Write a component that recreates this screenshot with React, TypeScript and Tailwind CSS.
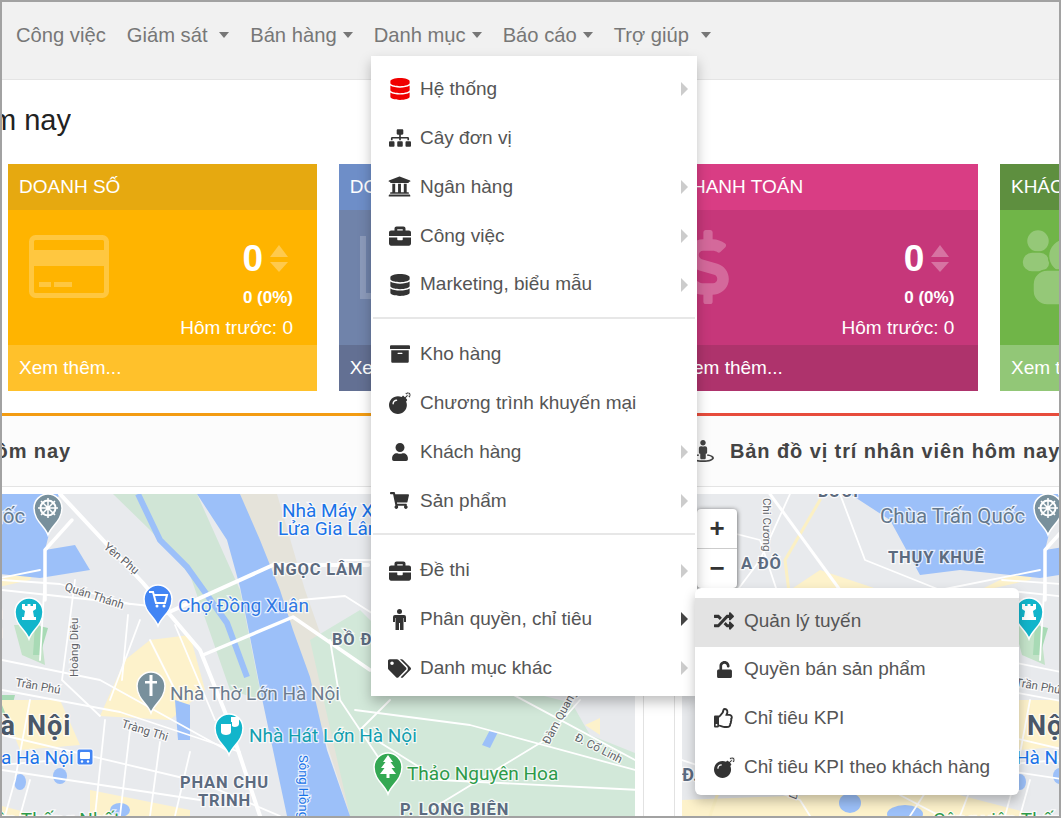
import React from 'react';
import {
  FaArchive,
  FaBomb,
  FaBriefcase,
  FaDatabase,
  FaDollarSign,
  FaRandom,
  FaRegThumbsUp,
  FaShoppingCart,
  FaSitemap,
  FaStreetView,
  FaTags,
  FaUniversity,
  FaUnlock,
  FaUser,
} from 'react-icons/fa';

function MaleIcon() {
  return (
    <svg width="13" height="21" viewBox="0 0 13 21" className="fill-current">
      <circle cx="6.500" cy="2.500" r="2.500" />
      <path d="M2 6h9a2 2 0 0 1 2 2v5h-2V9h-.5v12H7v-7H6v7H2.500V9H2v4H0V8a2 2 0 0 1 2-2z" />
    </svg>
  );
}

const navItems = [
  { label: 'Công việc', caret: false },
  { label: 'Giám sát\u00a0', caret: true },
  { label: 'Bán hàng', caret: true },
  { label: 'Danh mục', caret: true },
  { label: 'Báo cáo', caret: true },
  { label: 'Trợ giúp\u00a0', caret: true },
];

const menuGroups = [
  [
    { label: 'Hệ thống', icon: <FaDatabase className="text-[#f00000]" size={22} />, sub: true },
    { label: 'Cây đơn vị', icon: <FaSitemap size={22} />, sub: false },
    { label: 'Ngân hàng', icon: <FaUniversity size={23} />, sub: true },
    { label: 'Công việc', icon: <FaBriefcase size={22} />, sub: true },
    { label: 'Marketing, biểu mẫu', icon: <FaDatabase size={22} />, sub: true },
  ],
  [
    { label: 'Kho hàng', icon: <FaArchive size={20} />, sub: false },
    { label: 'Chương trình khuyến mại', icon: <FaBomb size={22} />, sub: false },
    { label: 'Khách hàng', icon: <FaUser size={18} />, sub: true },
    { label: 'Sản phẩm', icon: <FaShoppingCart size={19} />, sub: true },
  ],
  [
    { label: 'Đề thi', icon: <FaBriefcase size={22} />, sub: true },
    { label: 'Phân quyền, chỉ tiêu', icon: <MaleIcon />, sub: true, active: true },
    { label: 'Danh mục khác', icon: <FaTags size={23} />, sub: true },
  ],
];

const subItems = [
  { label: 'Quản lý tuyến', icon: <FaRandom size={20} />, active: true },
  { label: 'Quyền bán sản phẩm', icon: <FaUnlock size={17} /> },
  { label: 'Chỉ tiêu KPI', icon: <FaRegThumbsUp size={20} /> },
  { label: 'Chỉ tiêu KPI theo khách hàng', icon: <FaBomb size={21} /> },
];

function SortIcon() {
  return (
    <svg width="18" height="27" viewBox="0 0 18 27" className="fill-white/30">
      <path d="M9 0l9 12H0z" />
      <path d="M0 17h18l-9 10z" />
    </svg>
  );
}

function CardIcon() {
  return (
    <svg width="80" height="64" viewBox="0 0 80 64" className="fill-none stroke-white/25">
      <rect x="2.500" y="2.500" width="75" height="58" rx="4" strokeWidth="5" />
      <path d="M5 23h70" strokeWidth="16" />
      <path d="M10 49.500h12M25 49.500h18" strokeWidth="5" />
    </svg>
  );
}

function ChartIcon() {
  return (
    <svg width="80" height="64" viewBox="0 0 80 64" className="fill-none stroke-white/20">
      <path d="M3 1v60h77" strokeWidth="6" />
    </svg>
  );
}

function UsersIcon() {
  return (
    <svg width="90" height="76" viewBox="0 0 90 76" className="fill-[#95c878] stroke-[#70b548] -mt-[5px]" strokeWidth="1.500">
      <circle cx="17" cy="11" r="11.500" />
      <rect x="1" y="22" width="28" height="20" rx="10" />
      <circle cx="45" cy="26" r="17.500" />
      <rect x="12" y="40" width="62" height="35" rx="14" />
    </svg>
  );
}

function StatCard({
  title,
  icon,
  head,
  body,
  foot,
}: {
  title: string;
  icon: React.ReactNode;
  head: string;
  body: string;
  foot: string;
}) {
  return (
    <div className="w-[309px] shrink-0 text-white">
      <div className={`h-[46px] flex items-center px-[11px] text-[19px] ${head}`}>{title}</div>
      <div className={`h-[135px] flex justify-between pl-[21px] pr-[24px] ${body}`}>
        <div className="pt-[25px] h-fit">{icon}</div>
        <div className="flex flex-col items-end">
          <div className="flex items-center gap-[7px] mt-[28px] mr-[5px] h-[40px]">
            <span className="text-[37px] leading-none font-bold">0</span>
            <SortIcon />
          </div>
          <div className="mt-[9px] text-[17px] font-bold leading-[22px]">0 (0%)</div>
          <div className="mt-[8px] text-[19px] leading-[22px]">Hôm trước: 0</div>
        </div>
      </div>
      <div className={`h-[46px] flex items-center px-[11px] text-[19px] ${foot}`}>Xem thêm...</div>
    </div>
  );
}

function Pin({ x, y, color, children }: { x: number; y: number; color: string; children?: React.ReactNode }) {
  return (
    <g transform={`translate(${x} ${y})`}>
      <path
        d="M0 27C-3 18-14 13-14 0A14 14 0 1 1 14 0C14 13 3 18 0 27Z"
        fill={color}
        stroke="#fff"
        strokeWidth="1.500"
      />
      {children}
    </g>
  );
}

function Label({
  x,
  y,
  size = 19,
  color,
  bold,
  rotate,
  spacing,
  anchor,
  children,
}: {
  x: number;
  y: number;
  size?: number;
  color: string;
  bold?: boolean;
  rotate?: number;
  spacing?: number;
  anchor?: 'end';
  children: string;
}) {
  return (
    <text
      x={x}
      y={y}
      fontSize={size}
      fill={color}
      fontWeight={bold ? 700 : 400}
      letterSpacing={spacing}
      textAnchor={anchor}
      stroke="#ffffff"
      strokeOpacity="0.75"
      strokeWidth="2.500"
      paintOrder="stroke"
      transform={rotate ? `rotate(${rotate} ${x} ${y})` : undefined}
    >
      {children}
    </text>
  );
}

const thinRoads = [
  'M2 590L150 606',
  'M2 580L60 584L130 604',
  'M45 555L45 575L40 660',
  'M75 580L62 680L100 716',
  'M2 660L100 680L230 752',
  'M2 690L120 712L240 752',
  'M2 735L200 782L280 816',
  'M30 700L15 780L5 816',
  'M105 720L95 816',
  'M130 730L120 816',
  'M160 742L150 816',
  'M190 752L175 816',
  'M2 770L200 800',
  'M150 640L180 700',
  'M175 625L215 720',
  'M128 615L122 680',
  'M140 620L110 700',
  'M340 560L420 560L500 640',
  'M330 640L340 700L380 760',
  'M420 620L400 690',
  'M300 600L345 596L430 650L635 760',
  'M355 710L470 725L635 770',
  'M420 816L545 740L580 700',
  'M390 700L360 730L440 780L640 790',
  'M-318 520L-240 540L-220 600',
  'M-210 494L-240 560L-300 640',
  'M-160 494L-135 560L-60 590L40 570',
  'M-90 816L-60 770L59 760',
  'M-318 760L-200 800L-190 816',
  'M-40 816L-30 790',
  'M20 816L30 780',
  'M-100 795L-60 816',
];

function MapArt({ viewBox, width }: { viewBox: string; width: number }) {
  return (
    <svg width={width} height="322" viewBox={viewBox} className="block" fontFamily="Roboto, sans-serif">
      <rect x="-330" y="480" width="990" height="350" fill="#e8eaed" />

      {/* green and sand along the river */}
      <path d="M113 494L197 494L240 590L262 700L230 690L190 575L150 530Z" fill="#d0e5d6" />
      <path d="M240 494L277 494L305 590L340 690L395 816L350 816L300 660Z" fill="#e5e3da" />
      <path d="M310 640L360 610L400 650L450 640L520 690L640 720L640 816L350 816Z" fill="#d2e8d9" />
      <path d="M570 700L640 700L640 755L590 735Z" fill="#e8eaed" />
      <path d="M14 625L40 625L45 665L22 655Z" fill="#c4e3c9" />
      <path d="M35 625L48 628L40 655L33 655Z" fill="#a8dab5" />
      <path d="M0 695L15 695L10 715L0 715Z" fill="#a8dab5" />

      {/* old town */}
      <path d="M150 640L190 635L205 690L170 720L100 716L125 660Z" fill="#fdf2cb" />
      <path d="M0 700L60 700L80 745L20 750Z" fill="#fdf2cb" />
      <path d="M90 790L190 810L190 816L90 816Z" fill="#fdf2cb" />
      <path d="M-210 590L-120 600L-40 630L-60 610L-180 570Z" fill="#fdf2cb" />
      <path d="M-318 800L-60 790L40 816L-318 816Z" fill="#fdf2cb" />
      <path d="M-60 600L30 580L40 560L-20 590Z" fill="#fdf2cb" />
      <path d="M585 725L600 718L600 735Z" fill="#fdf2cb" />

      {/* water */}
      <path d="M197 494L240 494L260 540L280 590L293 630L310 677L327 750L350 816L287 816L263 703L250 637L240 587L227 540Z" fill="#9cc0f9" />
      <path d="M138 494L160 540L187 567L227 623L247 677" stroke="#9cc0f9" strokeWidth="6" fill="none" />
      <path d="M-150 494L59 494L45 550L75 545L90 570L40 578L-40 570L-80 575L-110 520Z" fill="#9cc0f9" />
      <path d="M175 700L190 705L190 740L178 740Z" fill="#9cc0f9" />
      <path d="M490 730L498 732L490 748L482 745Z" fill="#9cc0f9" />
      <ellipse cx="60" cy="776" rx="7" ry="8" fill="#9cc0f9" />
      <ellipse cx="20" cy="782" rx="6" ry="8" fill="#9cc0f9" />
      <ellipse cx="120" cy="810" rx="10" ry="7" fill="#9cc0f9" />
      <ellipse cx="-150" cy="803" rx="11" ry="10" fill="#9cc0f9" />
      <ellipse cx="-95" cy="814" rx="18" ry="9" fill="#9cc0f9" />

      {/* roads */}
      <g stroke="#ffffff" fill="none" strokeLinecap="round" strokeLinejoin="round">
        <path d="M60 494L143 583L200 650L227 717L260 816" strokeWidth="4" />
        <path d="M167 613L273 565L368 565" strokeWidth="4" />
        <path d="M203 655L293 617L370 670" strokeWidth="3.500" />
        <path d="M72 520L45 550L45 600" strokeWidth="3.500" />
        {thinRoads.map((d) => (
          <path key={d} d={d} strokeWidth="1.800" />
        ))}
        <path d="M-290 816L-250 700L-210 600L-215 560L-180 500" strokeWidth="3" stroke="#fbf0c4" />
        <path d="M-230 494L-160 590" strokeWidth="3" />
      </g>

      {/* labels */}
      <Label x={-120} y={523} size={20.500} color="#64788c">Chùa Trấn Quốc</Label>
      <Label x={-112} y={563} size={16.500} color="#5c6b80" bold spacing={0.8}>THỤY KHUÊ</Label>
      <Label x={-259} y={569} size={16.500} color="#5c6b80" bold spacing={0.8}>A ĐÔ</Label>
      <Label x={-182} y={497} size={16} color="#5c6b80" bold spacing={0.8}>BƯỞI</Label>
      <Label x={-237} y={498} size={11.500} color="#5f6368" rotate={90}>Chi Cương</Label>
      <Label x={-318} y={781} size={18} color="#5c6b80" bold>Đ.</Label>
      <Label x={-204} y={800} size={11} color="#5f6368" rotate={-70}>Duy</Label>
      <Label x={282} y={517} color="#1a73e8">Nhà Máy X</Label>
      <Label x={278} y={535} color="#1a73e8">Lửa Gia Lâm</Label>
      <Label x={273} y={575} size={16.500} color="#5c6b80" bold spacing={0.8}>NGỌC LÂM</Label>
      <Label x={178} y={612} color="#2f78e4">Chợ Đồng Xuân</Label>
      <Label x={332} y={645} size={16.500} color="#5c6b80" bold spacing={0.8}>BỒ Đ</Label>
      <Label x={170} y={700} color="#6d7c8e">Nhà Thờ Lớn Hà Nội</Label>
      <Label x={249} y={742} color="#129eaf">Nhà Hát Lớn Hà Nội</Label>
      <Label x={407} y={780} color="#2d9a49">Thảo Nguyên Hoa</Label>
      <Label x={180} y={788} size={16.500} color="#5c6b80" bold spacing={0.8}>PHAN CHU</Label>
      <Label x={198} y={806} size={16.500} color="#5c6b80" bold spacing={0.8}>TRINH</Label>
      <Label x={400} y={815} size={16.500} color="#5c6b80" bold spacing={0.8}>P. LONG BIÊN</Label>
      <Label x={15} y={735} size={27} color="#4a5768" bold anchor="end">Hà</Label>
      <Label x={27} y={735} size={27} color="#4a5768" bold spacing={1}>Nội</Label>
      <Label x={-12} y={764} size={19} color="#1a73e8">Ga Hà Nội</Label>
      <Label x={-8} y={618} color="#129eaf">h</Label>
      <Label x={-8} y={637} color="#129eaf">h</Label>
      <Label x={-67} y={826} color="#2d9a49">Công viên Thống Nhất</Label>
      <Label x={103} y={548} size={11.500} color="#5f6368" rotate={40}>Yên Phụ</Label>
      <Label x={64} y={590} size={11.500} color="#5f6368" rotate={18}>Quán Thánh</Label>
      <Label x={78} y={677} size={11.500} color="#5f6368" rotate={-90}>Hoàng Diệu</Label>
      <Label x={15} y={686} size={11.500} color="#5f6368" rotate={10}>Trần Phú</Label>
      <Label x={121} y={727} size={11.500} color="#5f6368" rotate={17}>Tràng Thi</Label>
      <Label x={299} y={755} size={13} color="#1a73e8" rotate={90}>Sông Hồng</Label>
      <Label x={549} y={745} size={11.500} color="#5f6368" rotate={-62}>Đàm Quang</Label>
      <Label x={574} y={740} size={11.500} color="#5f6368" rotate={27}>Đ. Cổ Linh</Label>

      {/* pins */}
      <Pin x={48} y={508} color="#78909c">
        <circle r="7.500" fill="none" stroke="#fff" strokeWidth="2" />
        <path d="M-10 0H10M0-10V10M-7-7L7 7M7-7L-7 7" stroke="#fff" strokeWidth="1.500" />
      </Pin>
      <Pin x={158} y={599} color="#4285f4">
        <path d="M-9-7H-5L-2 4H7L9-4H-4" fill="none" stroke="#fff" strokeWidth="2" />
        <circle cx="-1" cy="7" r="1.500" fill="#fff" />
        <circle cx="6" cy="7" r="1.500" fill="#fff" />
      </Pin>
      <Pin x={29} y={612} color="#12b5cb">
        <path d="M-7-8H-4V-6H-1.500V-8H1.500V-6H4V-8H7V-3L4-1L5 5H7V8H-7V5H-5L-4-1L-7-3Z" fill="#fff" />
      </Pin>
      <Pin x={151} y={686} color="#78909c">
        <path d="M-1.500-11H1.500V-5H6V-2.500H1.500V10H-1.500V-2.500H-6V-5H-1.500Z" fill="#fff" />
      </Pin>
      <Pin x={229} y={728} color="#12b5cb">
        <path d="M-8-4H2V4C2 8-8 8-8 4Z" fill="#fff" />
        <path d="M2-11H10V-4C10-1 5 0 3-2V-6H2Z" fill="#fff" />
      </Pin>
      <Pin x={388} y={767} color="#34a853">
        <path d="M0-12L5-5H2.500L7 1H3.500L8 7H1.500V11H-1.500V7H-8L-3.500 1H-7L-2.500-5H-5Z" fill="#fff" />
      </Pin>
      <g transform="translate(77 749)">
        <rect width="16" height="16" rx="2" fill="#4285f4" stroke="#fff" />
        <rect x="3" y="3" width="10" height="7" rx="1" fill="#fff" />
        <circle cx="5" cy="12.500" r="1.200" fill="#fff" />
        <circle cx="11" cy="12.500" r="1.200" fill="#fff" />
      </g>
    </svg>
  );
}

function Caret() {
  return <span className="ml-[6px] inline-block border-x-[5.5px] border-t-[6px] border-x-transparent border-t-[#777]" />;
}

export default function App() {
  return (
    <div
      className="relative w-[1061px] h-[818px] overflow-hidden border-2 border-[#a2a2a2] bg-white text-[19px] text-[#555]"
      style={{ fontFamily: '"Liberation Sans", Arial, sans-serif' }}
    >
      {/* Navbar */}
      <nav className="h-[78px] flex items-start gap-[21px] pl-[14px] pt-[21px] bg-[#f1f1f1] border-b border-[#e4e4e4] text-[#777] text-[20.2px]">
        {navItems.map((item) => (
          <div key={item.label} className="flex items-center h-[24px] whitespace-nowrap">
            {item.label}
            {item.caret && <Caret />}
          </div>
        ))}
      </nav>

      {/* Page title */}
      <div className="h-[84px] w-[69px] flex justify-end pt-[24px] overflow-hidden">
        <h1 className="text-[29px] leading-[32px] text-[#222] whitespace-nowrap">Hôm nay</h1>
      </div>

      {/* Stat cards */}
      <div className="flex gap-[21.67px] pl-[6px]">
        <StatCard title="DOANH SỐ" icon={<CardIcon />} head="bg-[#e6a910]" body="bg-[#ffb400]" foot="bg-[#ffc12b]" />
        <StatCard title="DOANH THU" icon={<ChartIcon />} head="bg-[#6e8ec8]" body="bg-[#7083aa]" foot="bg-[#637093]" />
        <StatCard
          title="THANH TOÁN"
          icon={<FaDollarSign size={74} className="text-white/25 -ml-[19px] -mt-[5px]" />}
          head="bg-[#d93d84]"
          body="bg-[#c6377a]"
          foot="bg-[#ae336c]"
        />
        <StatCard title="KHÁCH HÀNG" icon={<UsersIcon />} head="bg-[#5e8f3f]" body="bg-[#70b548]" foot="bg-[#92c777]" />
      </div>

      {/* Map panels */}
      <div className="flex gap-[30px] mt-[22px]">
        <section className="w-[642px] shrink-0 border-t-[3px] border-t-[#f39c12] border-r border-r-[#e2e2e2]">
          <div className="h-[71px] flex justify-end items-center pr-[572px] bg-[#fcfcfc] border-b border-[#e4e4e4] overflow-hidden">
            <h2 className="text-[20px] tracking-[0.9px] font-bold text-[#444] whitespace-nowrap">Hôm nay</h2>
          </div>
          <div className="mt-[7px]">
            <MapArt viewBox="2 494 633 322" width={633} />
          </div>
        </section>
        <section className="flex-1 min-w-0 border-t-[3px] border-t-[#e74c3c] border-l border-l-[#e2e2e2]">
          <div className="h-[71px] flex items-center gap-[16px] pl-[17px] bg-[#fcfcfc] border-b border-[#e4e4e4] whitespace-nowrap text-[#444]">
            <FaStreetView size={22} className="shrink-0" />
            <h2 className="text-[20px] tracking-[0.9px] font-bold">Bản đồ vị trí nhân viên hôm nay</h2>
          </div>
          <div className="relative mt-[7px] ml-[7px]">
            <MapArt viewBox="-318 494 377 322" width={377} />
            <div className="absolute left-[15px] top-[15px] w-[40px] h-[79px] flex flex-col bg-white rounded-[4px] shadow-[0_1px_5px_rgba(0,0,0,0.65)] text-[#333] font-bold">
              <div className="h-[40px] flex items-center justify-center text-[26px] border-b border-[#ccc]">+</div>
              <div className="flex-1 flex items-center justify-center text-[26px]">−</div>
            </div>
          </div>
        </section>
      </div>

      {/* Danh mục dropdown */}
      <div className="absolute left-[369px] top-[54px] w-[326px] h-[640px] pt-[9px] bg-white shadow-[0_6px_12px_rgba(0,0,0,0.25)]">
        {menuGroups.map((group, i) => (
          <div key={i}>
            {i > 0 && <div className="h-[2px] mt-[8px] mb-[11px] mx-[2px] bg-[#e7e7e7]" />}
            {group.map((item) => (
              <div key={item.label} className="h-[48.8px] flex items-center pl-[17px] pr-[9px]">
                <span className="w-[23px] mr-[9px] flex justify-center text-[#333]">{item.icon}</span>
                <span className="flex-1 whitespace-nowrap">{item.label}</span>
                {item.sub && (
                  <span
                    className={`border-y-[7px] border-l-[7px] border-y-transparent ${
                      'active' in item ? 'border-l-[#444]' : 'border-l-[#ccc]'
                    }`}
                  />
                )}
              </div>
            ))}
          </div>
        ))}
      </div>

      {/* Phân quyền submenu */}
      <div className="absolute left-[693px] top-[586px] w-[324px] h-[207px] pt-[10px] bg-white rounded-[6px] shadow-[0_6px_12px_rgba(0,0,0,0.25)]">
        {subItems.map((item) => (
          <div
            key={item.label}
            className={`h-[48.8px] flex items-center pl-[17px] pb-[3px] whitespace-nowrap ${item.active ? 'bg-[#e3e3e3]' : ''}`}
          >
            <span className="w-[24px] mr-[8px] flex justify-center text-[#333]">{item.icon}</span>
            {item.label}
          </div>
        ))}
      </div>
    </div>
  );
}
